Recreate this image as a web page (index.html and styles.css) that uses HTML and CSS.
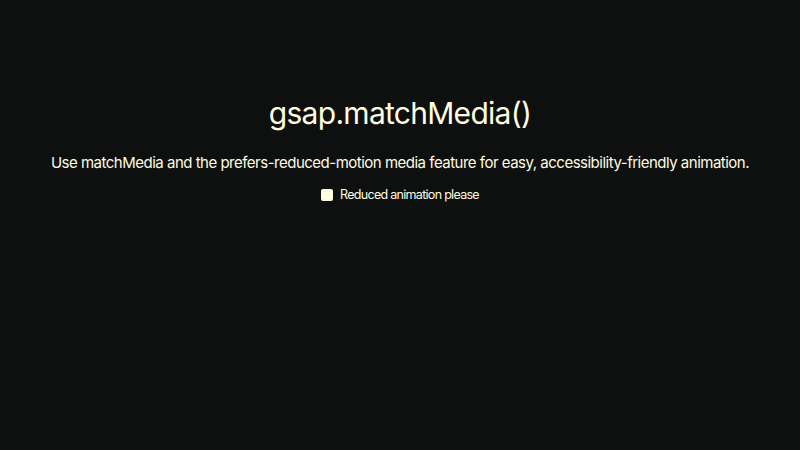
FILE: index.html
```html
<!DOCTYPE html>
<html lang="en">
<head>
<meta charset="utf-8">
<title>gsap.matchMedia()</title>
<link rel="stylesheet" href="styles.css">
</head>
<body>
  <main class="demo">
    <h1 class="title">gsap.matchMedia()</h1>
    <p class="lead">Use matchMedia and the prefers-reduced-motion media feature for easy, accessibility-friendly animation.</p>
    <label class="toggle">
      <input type="checkbox" class="toggle-box">
      <span class="toggle-text">Reduced animation please</span>
    </label>
  </main>
</body>
</html>
```
FILE: styles.css
```css
html, body {
  margin: 0;
  height: 100%;
}

body {
  background: #0e100f;
  color: #fffce1;
  font-family: Inter, "Noto Sans", sans-serif;
}

.demo {
  display: flex;
  flex-direction: column;
  align-items: center;
  padding-top: 93px;
}

.title {
  margin: 0;
  font-size: 30px;
  font-weight: 400;
  line-height: 40px;
  letter-spacing: -0.72px;
}

.lead {
  margin: 18px 0 0;
  font-size: 15px;
  line-height: 24px;
  letter-spacing: -0.5px;
}

.toggle {
  margin-top: 12px;
  display: flex;
  align-items: center;
  gap: 7px;
  font-size: 12.5px;
  letter-spacing: -0.7px;
}

.toggle-box {
  appearance: none;
  margin: 0;
  width: 12px;
  height: 12px;
  border-radius: 2px;
  background: #fffce1;
}
```
